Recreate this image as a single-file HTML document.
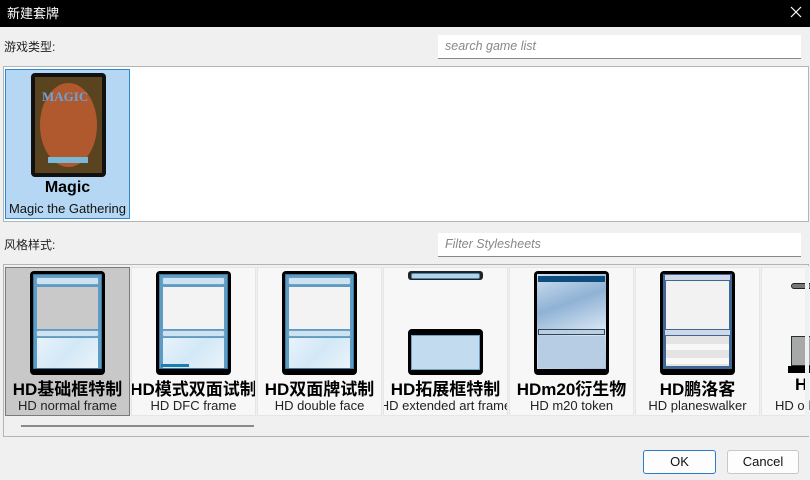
<!DOCTYPE html>
<html><head><meta charset="utf-8"><style>
*{margin:0;padding:0;box-sizing:border-box}
body{width:810px;height:480px;background:#f0f0f0;font-family:"Liberation Sans","Noto Sans CJK SC",sans-serif;position:relative;overflow:hidden}
.a{position:absolute}
.title{left:0;top:0;width:810px;height:27px;background:#000;color:#fff;font-size:13px;line-height:27px;padding-left:7px}
.lbl{font-size:12px;color:#222}
.inp{background:#fff;border-bottom:1px solid #888;font-style:italic;color:#888;font-size:12.5px;line-height:23px;padding-left:7px}
.box{background:#fff;border:1px solid #b4b4b4}
.item{width:125px;height:149px;border:1px solid #e6e6e6;background:#f7f7f7;overflow:hidden}
.item .t{position:absolute;top:107px;left:-20px;right:-20px;text-align:center;font-weight:bold;font-size:17px;white-space:nowrap;color:#000}
.item .s{position:absolute;top:130px;left:-20px;right:-20px;text-align:center;font-size:13px;white-space:nowrap;color:#222}
.card{position:absolute;left:24px;top:3px;width:75px;height:104px;background:#000;border-radius:4px}
.fr{position:absolute;left:3px;top:3px;right:3px;bottom:6px;background:#5f9cc4;border:1px solid #3a769d}
.bar{position:absolute;left:2px;right:2px;background:#cde3f2;border:1px solid #6ea3c6;border-radius:2px}
.art{position:absolute;left:3px;right:3px;background:#f3f3f3}
.txt{position:absolute;left:3px;right:3px;background:linear-gradient(135deg,#e8f3fb,#d3e8f6,#eaf4fb)}
.btn{background:#fdfdfd;border:1px solid #c8c8c8;border-radius:3px;font-size:13px;text-align:center;line-height:22px;color:#111}
</style></head><body>
<div class="a title">新建套牌</div>
<svg class="a" style="left:790px;top:6px" width="12" height="12" viewBox="0 0 12 12"><path d="M1 1L11 11M11 1L1 11" stroke="#fff" stroke-width="1.2"/></svg>
<div class="a lbl" style="left:4px;top:38px">游戏类型:</div>
<div class="a inp" style="left:438px;top:35px;width:363px;height:24px">search game list</div>
<div class="a box" style="left:3px;top:66px;width:806px;height:156px"></div>
<div class="a" style="left:5px;top:69px;width:125px;height:150px;background:#b5d7f3;border:1px solid #2a8ad4">
  <div class="a" style="left:25px;top:3px;width:75px;height:104px;background:#111;border-radius:4px">
    <div class="a" style="left:4px;top:4px;right:4px;bottom:4px;background:#5a4420"></div>
    <div class="a" style="left:9px;top:10px;width:57px;height:84px;border-radius:50%;background:#b0582e"></div>
    <div class="a" style="left:11px;top:16px;font-size:13px;font-weight:bold;color:#6aa3d8;font-family:'Liberation Serif'">MAGIC</div>
    <div class="a" style="left:17px;top:84px;width:40px;height:6px;background:#7ab8d8"></div>
  </div>
  <div class="a" style="top:109px;width:100%;text-align:center;font-weight:bold;font-size:16px">Magic</div>
  <div class="a" style="top:131px;width:100%;text-align:center;font-size:13px;color:#111;white-space:nowrap">Magic the Gathering</div>
</div>
<div class="a lbl" style="left:4px;top:236px">风格样式:</div>
<div class="a inp" style="left:438px;top:233px;width:363px;height:24px">Filter Stylesheets</div>
<div class="a box" style="left:3px;top:264px;width:806px;height:173px;background:#f0f0f0"></div>

<div class="a item" style="left:5px;top:267px;background:#c8c8c8;border-color:#7a7a7a">
  <div class="card"><div class="fr"><div class="bar" style="top:2px;height:8px"></div><div class="art" style="top:12px;height:42px;background:#c9c9c9"></div><div class="bar" style="top:55px;height:7px"></div><div class="txt" style="top:63px;height:30px"></div></div></div>
  <div class="t">HD基础框特制</div><div class="s">HD normal frame</div></div>
<div class="a item" style="left:131px;top:267px">
  <div class="card"><div class="fr"><div class="bar" style="top:2px;height:8px"></div><div class="art" style="top:12px;height:42px"></div><div class="bar" style="top:55px;height:7px"></div><div class="txt" style="top:63px;height:30px"></div><div class="a" style="left:1px;bottom:1px;width:28px;height:3px;background:#1a7fb0"></div></div></div>
  <div class="t">HD模式双面试制</div><div class="s">HD DFC frame</div></div>
<div class="a item" style="left:257px;top:267px">
  <div class="card"><div class="fr"><div class="bar" style="top:2px;height:8px"></div><div class="art" style="top:12px;height:42px"></div><div class="bar" style="top:55px;height:7px"></div><div class="txt" style="top:63px;height:30px"></div></div></div>
  <div class="t">HD双面牌试制</div><div class="s">HD double face</div></div>
<div class="a item" style="left:383px;top:267px">
  <div class="a" style="left:24px;top:3px;width:75px;height:9px;background:#222;border-radius:3px"><div class="a" style="left:3px;top:2px;right:3px;height:6px;background:#b5d4ec;border:1px solid #4a86ad;border-radius:2px"></div></div>
  <div class="a" style="left:24px;top:61px;width:75px;height:46px;background:#000;border-radius:4px"><div class="a" style="left:3px;top:6px;right:3px;bottom:5px;background:#c3dbef;border:1px solid #6ea3c6"></div></div>
  <div class="t">HD拓展框特制</div><div class="s">HD extended art frame</div></div>
<div class="a item" style="left:509px;top:267px">
  <div class="card"><div class="a" style="left:3px;top:3px;right:3px;bottom:6px;background:linear-gradient(160deg,#cfe0f0,#8fb2d5,#d8e6f3,#9dbde0)"><div class="a" style="left:1px;right:1px;top:2px;height:6px;background:#0d4c7c"></div><div class="a" style="left:1px;right:1px;top:55px;height:6px;background:#b8cfe4;border:1px solid #345"></div><div class="a" style="left:1px;right:1px;top:62px;height:32px;background:#b6cde3"></div></div></div>
  <div class="t">HDm20衍生物</div><div class="s">HD m20 token</div></div>
<div class="a item" style="left:635px;top:267px">
  <div class="card"><div class="a" style="left:3px;top:3px;right:3px;bottom:6px;background:#3f6796"><div class="a" style="left:2px;right:2px;top:1px;height:5px;background:#cfd8e6"></div><div class="a" style="left:3px;right:3px;top:7px;height:48px;background:#f2f2f2"></div><div class="a" style="left:2px;right:2px;top:56px;height:5px;background:#cfd8e6"></div><div class="a" style="left:3px;right:3px;top:62px;height:30px;background:repeating-linear-gradient(#e4e4e4 0 8px,#f8f8f8 8px 14px)"></div></div></div>
  <div class="t">HD鹏洛客</div><div class="s">HD planeswalker</div></div>
<div class="a item" style="left:761px;top:267px;width:50px">
  <div class="a" style="left:29px;top:15px;width:30px;height:6px;background:#777;border:1px solid #222;border-radius:3px"></div>
  <div class="a" style="left:29px;top:68px;width:30px;height:30px;background:#a8a8a8;border:1px solid #233"></div>
  <div class="a" style="left:26px;top:98px;width:30px;height:7px;background:#000"></div>
  <div class="a" style="left:33px;top:107px;font-weight:bold;font-size:17px">H</div>
  <div class="a" style="left:13px;top:130px;font-size:13px;white-space:nowrap;color:#222">HD oil</div></div>
<div class="a" style="left:805px;top:266px;width:4px;height:170px;background:#f0f0f0"></div>
<div class="a" style="left:21px;top:425px;width:233px;height:2px;background:#8a8a8a"></div>
<div class="a btn" style="left:643px;top:450px;width:73px;height:24px;border-color:#2a7bc8">OK</div>
<div class="a btn" style="left:727px;top:450px;width:72px;height:24px">Cancel</div>
</body></html>
